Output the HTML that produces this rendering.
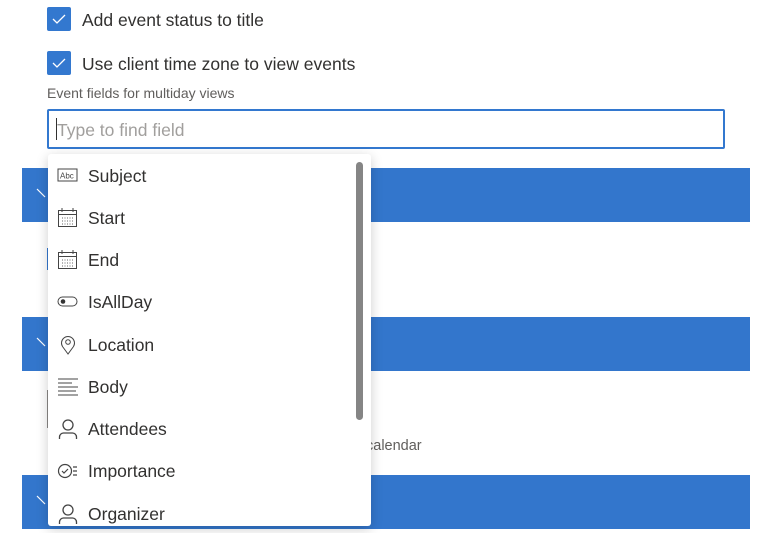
<!DOCTYPE html>
<html><head><style>
body{margin:0;width:768px;height:533px;background:#fff;position:relative;overflow:hidden;font-family:"Liberation Sans",sans-serif;color:#323130}
.a{position:absolute}
.cb{position:absolute;left:47px;width:24px;height:24px;background:#3378cf;border-radius:2px}
.cb svg{position:absolute;left:5px;top:6px}
.bar{position:absolute;left:22px;width:728px;background:#3376cc}
.it{position:absolute;left:88px;font-size:17.5px;color:#323130}
.ic{position:absolute;left:57px}
</style></head><body>
<div class="cb" style="top:7px"><svg width="14" height="12"><path d="M1 6l4 4 8-8" stroke="#fff" stroke-width="1.3" fill="none"/></svg></div>
<div class="a" style="left:82px;top:10px;font-size:17.5px">Add event status to title</div>
<div class="cb" style="top:51px"><svg width="14" height="12"><path d="M1 6l4 4 8-8" stroke="#fff" stroke-width="1.3" fill="none"/></svg></div>
<div class="a" style="left:82px;top:54px;font-size:17.5px">Use client time zone to view events</div>
<div class="a" style="left:47px;top:85px;font-size:14px;color:#605e5c">Event fields for multiday views</div>
<div class="a" style="left:47px;top:109px;width:674px;height:36px;border:2px solid #3378cf;border-radius:2px"></div>
<div class="a" style="left:56px;top:118px;width:1px;height:22px;background:#323130"></div>
<div class="a" style="left:57px;top:120px;font-size:17.5px;color:#a19f9d">Type to find field</div>
<div class="bar" style="top:168px;height:54px"></div>
<div class="bar" style="top:317px;height:54px"></div>
<div class="bar" style="top:475px;height:54px"></div>
<svg class="a" style="left:35px;top:185px" width="16" height="16"><path d="M2 4l8 8" stroke="#fff" stroke-width="1.2"/></svg>
<svg class="a" style="left:35px;top:334px" width="16" height="16"><path d="M2 4l8 8" stroke="#fff" stroke-width="1.2"/></svg>
<svg class="a" style="left:35px;top:492px" width="16" height="16"><path d="M2 4l8 8" stroke="#fff" stroke-width="1.2"/></svg>
<div class="a" style="left:47px;top:248px;width:3px;height:22px;background:#3378cf"></div>
<div class="a" style="left:47px;top:390px;width:2px;height:38px;background:#8a8886"></div>
<div class="a" style="left:366px;top:438px;font-size:14.5px;color:#605e5c">calendar</div>
<div class="a" style="left:48px;top:154px;width:323px;height:372px;background:#fff;border-radius:3px;box-shadow:0 3px 12px rgba(0,0,0,.2)"></div>
<div class="a" style="left:356px;top:162px;width:7px;height:258px;background:#858585;border-radius:4px"></div>
<svg class="ic" style="top:168px" width="22" height="16"><rect x="1" y="1" width="19" height="12" fill="none" stroke="#444"/><text x="3" y="10.5" font-size="8" font-family="Liberation Sans" fill="#444">Abc</text></svg>
<div class="it" style="top:166px">Subject</div>
<svg class="ic" style="top:207px" width="22" height="22"><rect x="1.5" y="3.5" width="18" height="16" fill="none" stroke="#444"/><path d="M1.5 7.5h18M5 1v4M16 1v4" stroke="#444"/><path d="M5 11h11M5 14h11M5 17h11" stroke="#666" stroke-dasharray="1 1.5"/></svg>
<div class="it" style="top:208px">Start</div>
<svg class="ic" style="top:249px" width="22" height="22"><rect x="1.5" y="3.5" width="18" height="16" fill="none" stroke="#444"/><path d="M1.5 7.5h18M5 1v4M16 1v4" stroke="#444"/><path d="M5 11h11M5 14h11M5 17h11" stroke="#666" stroke-dasharray="1 1.5"/></svg>
<div class="it" style="top:250px">End</div>
<svg class="ic" style="top:295px" width="22" height="14"><rect x="1" y="2" width="19" height="9" rx="4.5" fill="none" stroke="#444"/><circle cx="6" cy="6.5" r="2.3" fill="#333"/></svg>
<div class="it" style="top:292px">IsAllDay</div>
<svg class="ic" style="top:334px" width="22" height="22"><path d="M11 20L5.5 12.5A6.5 6.5 0 1 1 16.5 12.5Z" fill="none" stroke="#444"/><circle cx="11" cy="8" r="2.3" fill="none" stroke="#444"/></svg>
<div class="it" style="top:335px">Location</div>
<svg class="ic" style="top:377px" width="22" height="20"><path d="M1 2h20M1 6h14M1 10h20M1 14h18M1 18h20" stroke="#444"/></svg>
<div class="it" style="top:377px">Body</div>
<svg class="ic" style="top:418px" width="22" height="22"><circle cx="11" cy="7" r="5" fill="none" stroke="#444" stroke-width="1.3"/><path d="M2.5 21v-2a4 4 0 0 1 4-4h9a4 4 0 0 1 4 4v2" fill="none" stroke="#444" stroke-width="1.3"/></svg>
<div class="it" style="top:419px">Attendees</div>
<svg class="ic" style="top:462px" width="22" height="18"><circle cx="8" cy="9" r="6.5" fill="none" stroke="#444" stroke-width="1.2"/><path d="M5 9l2 2 4-4" stroke="#444" fill="none" stroke-width="1.2"/><path d="M16 5h4M16 9h4M16 13h4" stroke="#444" stroke-width="1.2"/></svg>
<div class="it" style="top:461px">Importance</div>
<svg class="ic" style="top:503px" width="22" height="22"><circle cx="11" cy="7" r="5" fill="none" stroke="#444" stroke-width="1.3"/><path d="M2.5 21v-2a4 4 0 0 1 4-4h9a4 4 0 0 1 4 4v2" fill="none" stroke="#444" stroke-width="1.3"/></svg>
<div class="it" style="top:504px">Organizer</div>
</body></html>
